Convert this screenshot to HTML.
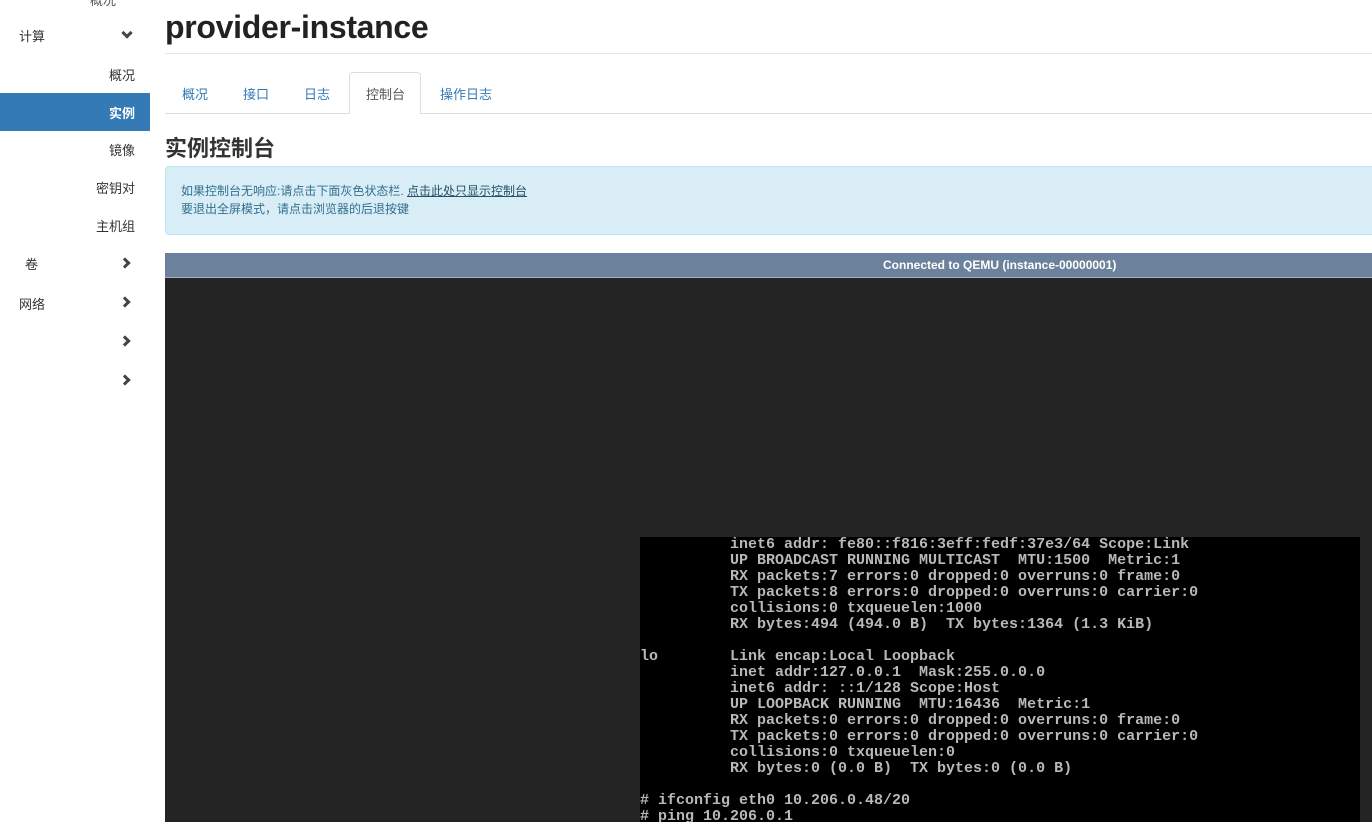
<!DOCTYPE html>
<html><head><meta charset="utf-8">
<style>
*{margin:0;padding:0;box-sizing:border-box}
body{width:1372px;height:822px;overflow:hidden;background:#fff;position:relative;font-family:"Liberation Sans","Noto Sans CJK SC",sans-serif;color:#333}
.a{position:absolute;white-space:nowrap}
.nav{font-size:13px;color:#333}
.chev{position:absolute;width:8px;height:8px;border-right:3px solid #444;border-bottom:3px solid #444}
.r{transform:rotate(-45deg)}
.d{transform:rotate(45deg)}
.tab{position:absolute;top:84px;font-size:13px;color:#337ab7}
pre{font-family:"Liberation Mono","DejaVu Sans Mono",monospace;font-size:15px;line-height:16px;color:#b8b8b8;font-weight:bold;white-space:pre !important}
</style></head><body>
<div class="a nav" style="left:90px;top:-10px;color:#555">概况</div>
<div class="a nav" style="left:19px;top:26px">计算</div>
<div class="chev d" style="left:123px;top:29px"></div>
<div class="a nav" style="left:109px;top:65px">概况</div>
<div class="a" style="left:0;top:93px;width:150px;height:38px;background:#337ab7"></div>
<div class="a nav" style="left:109px;top:103px;color:#fff;font-weight:bold">实例</div>
<div class="a nav" style="left:109px;top:140px">镜像</div>
<div class="a nav" style="left:96px;top:178px">密钥对</div>
<div class="a nav" style="left:96px;top:216px">主机组</div>
<div class="a nav" style="left:25px;top:254px">卷</div>
<div class="chev r" style="left:121px;top:259px"></div>
<div class="a nav" style="left:19px;top:294px">网络</div>
<div class="chev r" style="left:121px;top:298px"></div>
<div class="chev r" style="left:121px;top:337px"></div>
<div class="chev r" style="left:121px;top:376px"></div>

<div class="a" style="left:165px;top:9px;font-size:32px;font-weight:bold;color:#222;letter-spacing:-0.3px">provider-instance</div>
<div class="a" style="left:165px;top:53px;width:1207px;height:1px;background:#e5e5e5"></div>

<div class="a" style="left:165px;top:113px;width:1207px;height:1px;background:#ddd"></div>
<div class="a" style="left:349px;top:72px;width:72px;height:42px;border:1px solid #ddd;border-bottom:none;border-radius:4px 4px 0 0;background:#fff"></div>
<div class="tab" style="left:182px">概况</div>
<div class="tab" style="left:243px">接口</div>
<div class="tab" style="left:304px">日志</div>
<div class="tab" style="left:366px;color:#555">控制台</div>
<div class="tab" style="left:440px">操作日志</div>

<div class="a" style="left:165px;top:131px;font-size:22px;font-weight:bold;color:#333">实例控制台</div>

<div class="a" style="left:165px;top:166px;width:1215px;height:69px;background:#d9edf7;border:1px solid #bce8f1;border-radius:4px"></div>
<div class="a" style="left:181px;top:182px;font-size:12px;line-height:18px;color:#31708f">如果控制台无响应:请点击下面灰色状态栏. <span style="text-decoration:underline;color:#245269">点击此处只显示控制台</span><br>要退出全屏模式，请点击浏览器的后退按键</div>

<div class="a" style="left:165px;top:253px;width:1207px;height:25px;background:#6b819c;border-bottom:1px solid #a5b2c4"></div>
<div class="a" style="left:883px;top:258px;font-size:12px;font-weight:bold;color:#fff">Connected to QEMU (instance-00000001)</div>
<div class="a" style="left:165px;top:278px;width:1207px;height:544px;background:#242424"></div>
<div class="a" style="left:640px;top:537px;width:720px;height:285px;background:#000;overflow:hidden">
<pre>          inet6 addr: fe80::f816:3eff:fedf:37e3/64 Scope:Link
          UP BROADCAST RUNNING MULTICAST  MTU:1500  Metric:1
          RX packets:7 errors:0 dropped:0 overruns:0 frame:0
          TX packets:8 errors:0 dropped:0 overruns:0 carrier:0
          collisions:0 txqueuelen:1000
          RX bytes:494 (494.0 B)  TX bytes:1364 (1.3 KiB)

lo        Link encap:Local Loopback
          inet addr:127.0.0.1  Mask:255.0.0.0
          inet6 addr: ::1/128 Scope:Host
          UP LOOPBACK RUNNING  MTU:16436  Metric:1
          RX packets:0 errors:0 dropped:0 overruns:0 frame:0
          TX packets:0 errors:0 dropped:0 overruns:0 carrier:0
          collisions:0 txqueuelen:0
          RX bytes:0 (0.0 B)  TX bytes:0 (0.0 B)

# ifconfig eth0 10.206.0.48/20
# ping 10.206.0.1</pre></div>
</body></html>
